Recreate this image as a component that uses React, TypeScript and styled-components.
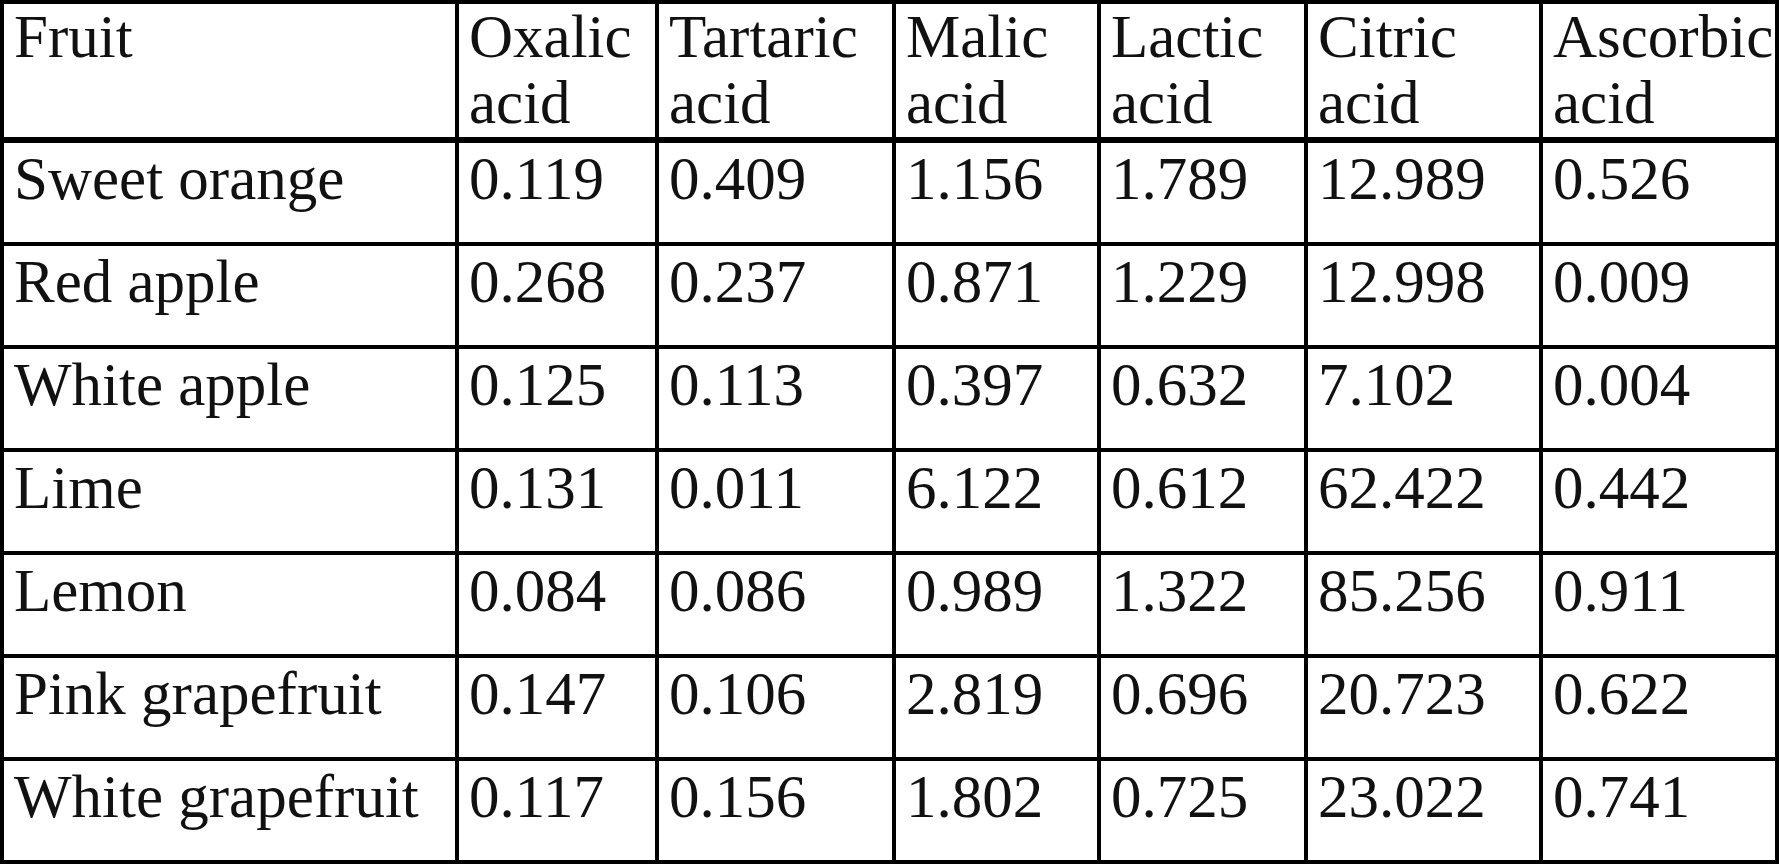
import React from "react";
import styled, { createGlobalStyle } from "styled-components";

const GlobalStyle = createGlobalStyle`
  html, body {
    margin: 0;
    padding: 0;
    background: #ffffff;
  }
`;

const columns = [
  { label: ["Fruit"], width: 455 },
  { label: ["Oxalic", "acid"], width: 200 },
  { label: ["Tartaric", "acid"], width: 237 },
  { label: ["Malic", "acid"], width: 205 },
  { label: ["Lactic", "acid"], width: 207 },
  { label: ["Citric", "acid"], width: 235 },
  { label: ["Ascorbic", "acid"], width: 236 },
];

const rows: [string, string, string, string, string, string, string][] = [
  ["Sweet orange", "0.119", "0.409", "1.156", "1.789", "12.989", "0.526"],
  ["Red apple", "0.268", "0.237", "0.871", "1.229", "12.998", "0.009"],
  ["White apple", "0.125", "0.113", "0.397", "0.632", "7.102", "0.004"],
  ["Lime", "0.131", "0.011", "6.122", "0.612", "62.422", "0.442"],
  ["Lemon", "0.084", "0.086", "0.989", "1.322", "85.256", "0.911"],
  ["Pink grapefruit", "0.147", "0.106", "2.819", "0.696", "20.723", "0.622"],
  ["White grapefruit", "0.117", "0.156", "1.802", "0.725", "23.022", "0.741"],
];

const Table = styled.table`
  width: 1779px;
  table-layout: fixed;
  border-collapse: collapse;
  font-family: "Liberation Serif", "Times New Roman", serif;
  font-size: 61px;
  line-height: 66px;
  color: #111111;
`;

const HeadCell = styled.th`
  border: 4px solid #000000;
  border-bottom-width: 6px;
  height: 133px;
  padding: 0 6px 0 10px;
  text-align: left;
  vertical-align: top;
  font-weight: normal;
  white-space: nowrap;
`;

const Cell = styled.td`
  border: 4px solid #000000;
  height: 96px;
  padding: 3px 6px 0 10px;
  text-align: left;
  vertical-align: top;
  white-space: nowrap;
`;

const Line = styled.span`
  display: block;
`;

export default function App() {
  return (
    <>
      <GlobalStyle />
      <Table>
        <colgroup>
          {columns.map((c, i) => (
            <col key={i} style={{ width: c.width }} />
          ))}
        </colgroup>
        <thead>
          <tr>
            {columns.map((c, i) => (
              <HeadCell key={i}>
                {c.label.map((l) => (
                  <Line key={l}>{l}</Line>
                ))}
              </HeadCell>
            ))}
          </tr>
        </thead>
        <tbody>
          {rows.map((r) => (
            <tr key={r[0]}>
              {r.map((v, i) => (
                <Cell key={i}>{v}</Cell>
              ))}
            </tr>
          ))}
        </tbody>
      </Table>
    </>
  );
}
